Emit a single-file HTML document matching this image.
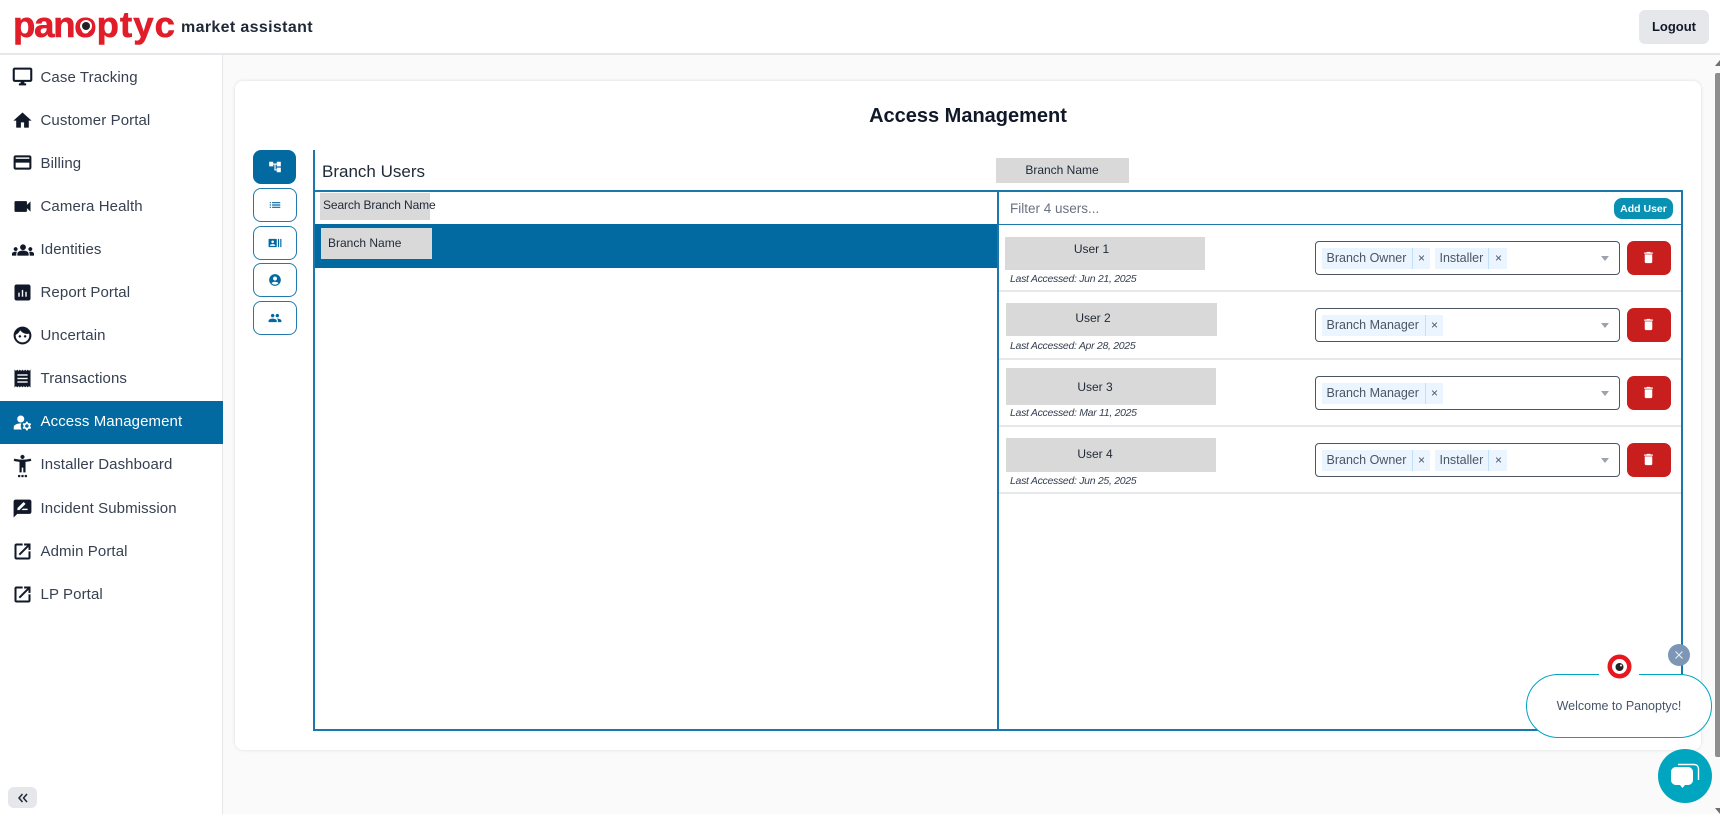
<!DOCTYPE html>
<html lang="en"><head><meta charset="utf-8"><title>Access Management</title>
<style>
*{box-sizing:border-box}
html,body{margin:0;padding:0;width:1720px;height:814px;overflow:hidden;background:#fafafa;font-family:"Liberation Sans",sans-serif}
.a{position:absolute}
.t{position:absolute;white-space:nowrap}
svg{position:absolute;display:block}
.nav{position:absolute;left:40.5px;white-space:nowrap;font-size:15px;letter-spacing:.1px;color:#374151;height:20px;line-height:20px}
.ni{fill:#111827;stroke:#111827;stroke-width:.35}
.rail{position:absolute;left:253px;width:44px;height:34px;border:1px solid #2279ad;border-radius:8px;background:#fff}
.rail svg{left:14px;top:9px;fill:#0369a1}
.g{position:absolute;background:#d9d9d9;color:#1f2937;font-size:12px;white-space:nowrap}
.sel{position:absolute;left:1315px;width:305px;height:34px;border:1px solid #4b5563;border-radius:4px;background:#fff}
.tag{position:absolute;top:6px;height:21px;background:#ebf5ff;color:#4b5563;font-size:12.5px;line-height:21px;padding-left:4.5px;white-space:nowrap}
.tag i{position:absolute;top:0;bottom:0;width:1px;background:#c2e0f8}
.tag b{position:absolute;top:0;font-weight:400;font-size:12px;color:#4b5563}
.arr{position:absolute;left:285px;top:14px;width:0;height:0;border-left:4.5px solid transparent;border-right:4.5px solid transparent;border-top:5px solid #9ca3af}
.del{position:absolute;left:1627px;width:44px;height:34px;background:#c81e1e;border-radius:7px}
.del svg{left:14px;top:9px;fill:#fff}
.ln{position:absolute;left:999px;width:682px;height:2px;background:#e5e7eb}
.la{position:absolute;left:1010px;font-size:10.5px;letter-spacing:-.3px;font-style:italic;color:#374151;white-space:nowrap;height:14px;line-height:14px}
</style></head>
<body>
<!-- header -->
<div class="a" style="left:0;top:0;width:1720px;height:55px;background:#fff;border-bottom:2px solid #e5e7eb"></div>
<div class="t" style="left:13px;top:4px;height:42px;line-height:42px;font-size:36.5px;font-weight:700;color:#e11d2a;-webkit-text-stroke:.6px #e11d2a"><span style="letter-spacing:-1.2px">pan</span><span>o</span><span style="letter-spacing:1.1px">ptyc</span></div>
<div class="a" style="left:79.5px;top:20px;width:12px;height:12px;border-radius:50%;background:#fff"></div>
<div class="a" style="left:81.5px;top:22px;width:8px;height:8px;border-radius:50%;background:#222"></div>
<div class="t" style="left:181px;top:18px;height:20px;line-height:20px;font-size:16px;font-weight:700;letter-spacing:.35px;color:#1f2937">market assistant</div>
<div class="a" style="left:1639px;top:10px;width:70px;height:34px;background:#e5e7eb;border-radius:6px;text-align:center;line-height:34px;font-size:13px;font-weight:700;color:#111827">Logout</div>

<!-- sidebar -->
<div class="a" style="left:0;top:55px;width:223px;height:759px;background:#fff;border-right:1px solid #e5e7eb"></div>
<div class="a" style="left:0;top:401px;width:223px;height:43px;background:#0369a1"></div>

<svg class="ni" style="left:12px;top:66px" width="21" height="21" viewBox="0 0 24 24"><path d="M21 2H3c-1.1 0-2 .9-2 2v12c0 1.1.9 2 2 2h7v2H8v2h8v-2h-2v-2h7c1.1 0 2-.9 2-2V4c0-1.1-.9-2-2-2zm0 14H3V4h18v12z"/></svg>
<div class="nav" style="top:68px">Case Tracking</div>
<svg class="ni" style="left:12px;top:110px" width="21" height="21" viewBox="0 0 24 24"><path d="M10 20v-6h4v6h5v-8h3L12 3 2 12h3v8z"/></svg>
<div class="nav" style="top:111px">Customer Portal</div>
<svg class="ni" style="left:12px;top:152px" width="21" height="21" viewBox="0 0 24 24"><path d="M20 4H4c-1.11 0-1.99.89-1.99 2L2 18c0 1.11.89 2 2 2h16c1.11 0 2-.89 2-2V6c0-1.11-.89-2-2-2zm0 14H4v-6h16v6zm0-10H4V6h16v2z"/></svg>
<div class="nav" style="top:154px">Billing</div>
<svg class="ni" style="left:12px;top:196px" width="21" height="21" viewBox="0 0 24 24"><path d="M17 10.5V7c0-.55-.45-1-1-1H4c-.55 0-1 .45-1 1v10c0 .55.45 1 1 1h12c.55 0 1-.45 1-1v-3.5l4 4v-11l-4 4z"/></svg>
<div class="nav" style="top:197px">Camera Health</div>
<svg class="ni" style="left:12px;top:239px" width="22" height="22" viewBox="0 0 24 24"><path d="M12 12.75c1.63 0 3.07.39 4.24.9 1.08.48 1.76 1.56 1.76 2.73V18H6v-1.61c0-1.18.68-2.26 1.76-2.73 1.17-.52 2.61-.91 4.24-.91zM4 13c1.1 0 2-.9 2-2s-.9-2-2-2-2 .9-2 2 .9 2 2 2zm1.13 1.1c-.37-.06-.74-.1-1.13-.1-.99 0-1.93.21-2.78.58C.48 14.9 0 15.62 0 16.43V18h4.5v-1.61c0-.83.23-1.61.63-2.29zM20 13c1.1 0 2-.9 2-2s-.9-2-2-2-2 .9-2 2 .9 2 2 2zm4 3.43c0-.81-.48-1.53-1.22-1.85-.85-.37-1.79-.58-2.78-.58-.39 0-.76.04-1.13.1.4.68.63 1.46.63 2.29V18H24v-1.57zM12 6c1.66 0 3 1.34 3 3s-1.34 3-3 3-3-1.34-3-3 1.34-3 3-3z"/></svg>
<div class="nav" style="top:240px">Identities</div>
<svg class="ni" style="left:12px;top:282px" width="21" height="21" viewBox="0 0 24 24"><path d="M19 3H5c-1.1 0-2 .9-2 2v14c0 1.1.9 2 2 2h14c1.1 0 2-.9 2-2V5c0-1.1-.9-2-2-2zM9 17H7v-5h2v5zm4 0h-2V9h2v8zm4 0h-2v-6h2v6z"/></svg>
<div class="nav" style="top:283px">Report Portal</div>
<svg class="ni" style="left:12px;top:325px" width="21" height="21" viewBox="0 0 24 24"><path d="M9 11.75c-.69 0-1.25.56-1.25 1.25s.56 1.25 1.25 1.25 1.25-.56 1.25-1.25-.56-1.25-1.25-1.25zm6 0c-.69 0-1.25.56-1.25 1.25s.56 1.25 1.25 1.25 1.25-.56 1.25-1.25-.56-1.25-1.25-1.25zM12 2C6.48 2 2 6.48 2 12s4.48 10 10 10 10-4.48 10-10S17.52 2 12 2zm0 18c-4.41 0-8-3.59-8-8 0-.29.02-.58.05-.86 2.36-1.05 4.23-2.98 5.21-5.37C11.07 8.33 14.05 10 17.42 10c.78 0 1.53-.09 2.25-.26.21.71.33 1.47.33 2.26 0 4.41-3.59 8-8 8z"/></svg>
<div class="nav" style="top:326px">Uncertain</div>
<svg class="ni" style="left:12px;top:368px" width="21" height="21" viewBox="0 0 24 24"><path d="M18 17H6v-2h12v2zm0-4H6v-2h12v2zm0-4H6V7h12v2zM3 22l1.5-1.5L6 22l1.5-1.5L9 22l1.5-1.5L12 22l1.5-1.5L15 22l1.5-1.5L18 22l1.5-1.5L21 22V2l-1.5 1.5L18 2l-1.5 1.5L15 2l-1.5 1.5L12 2l-1.5 1.5L9 2 7.5 3.500 6 2 4.500 3.500 3 2v20z"/></svg>
<div class="nav" style="top:369px">Transactions</div>
<svg style="left:12px;top:412px;fill:#fff" width="21" height="21" viewBox="0 0 24 24"><path d="M10 12c2.21 0 4-1.79 4-4s-1.79-4-4-4-4 1.79-4 4 1.79 4 4 4zM10.67 13.02C10.45 13.01 10.23 13 10 13c-2.42 0-4.68.67-6.61 1.82C2.51 15.34 2 16.32 2 17.35V20h9.26c-.79-1.13-1.26-2.51-1.26-4 0-1.07.25-2.07.67-2.98z"/><path d="M20.75 16c0-.22-.03-.42-.06-.63l1.14-1.01-1-1.73-1.45.49c-.32-.27-.68-.48-1.08-.63L18 11h-2l-.3 1.49c-.4.15-.76.36-1.08.63l-1.45-.49-1 1.73 1.14 1.01c-.03.21-.06.41-.06.63s.03.42.06.63l-1.14 1.01 1 1.73 1.45-.49c.32.27.68.48 1.08.63L16 21h2l.3-1.49c.4-.15.76-.36 1.08-.63l1.45.49 1-1.73-1.14-1.01c.03-.21.06-.41.06-.63zM17 18c-1.1 0-2-.9-2-2s.9-2 2-2 2 .9 2 2-.9 2-2 2z"/></svg>
<div class="nav" style="top:412px;color:#fff">Access Management</div>
<svg class="ni" style="left:11px;top:453px" width="23" height="26" viewBox="0 0 24 27"><path d="M20.5 6c-2.61.7-5.67 1-8.5 1s-5.89-.3-8.5-1L3 8c1.86.5 4 .83 6 1v11h2v-5h2v5h2V9c2-.17 4.14-.5 6-1l-.5-2zM12 6c1.1 0 2-.9 2-2s-.9-2-2-2-2 .9-2 2 .9 2 2 2z"/><path d="M7.500 23h2v2h-2zM11 23h2v2h-2zM14.500 23h2v2h-2z"/></svg>
<div class="nav" style="top:455px">Installer Dashboard</div>
<svg class="ni" style="left:12px;top:498px" width="21" height="21" viewBox="0 0 24 24"><path d="M20 2H4c-1.1 0-2 .9-2 2v18l4-4h14c1.1 0 2-.9 2-2V4c0-1.100-.9-2-2-2zM6 14v-2.470l6.880-6.880c.2-.2.51-.2.71 0l1.770 1.770c.2.2.2.51 0 .71L8.470 14H6zm12 0h-7.500l2-2H18v2z"/></svg>
<div class="nav" style="top:499px">Incident Submission</div>
<svg class="ni" style="left:12px;top:541px" width="21" height="21" viewBox="0 0 24 24"><path d="M19 19H5V5h7V3H5c-1.110 0-2 .9-2 2v14c0 1.100.89 2 2 2h14c1.100 0 2-.9 2-2v-7h-2v7zM14 3v2h3.590l-9.830 9.830 1.410 1.410L19 6.410V10h2V3h-7z"/></svg>
<div class="nav" style="top:542px">Admin Portal</div>
<svg class="ni" style="left:12px;top:584px" width="21" height="21" viewBox="0 0 24 24"><path d="M19 19H5V5h7V3H5c-1.110 0-2 .9-2 2v14c0 1.100.89 2 2 2h14c1.100 0 2-.9 2-2v-7h-2v7zM14 3v2h3.590l-9.830 9.830 1.410 1.410L19 6.410V10h2V3h-7z"/></svg>
<div class="nav" style="top:585px">LP Portal</div>

<div class="a" style="left:8px;top:787px;width:29px;height:21px;background:#e5e7eb;border-radius:6px"></div>
<svg style="left:18px;top:793px;fill:none;stroke:#1f2937;stroke-width:1.500" width="10" height="10" viewBox="0 0 10 10"><path d="M4.500 1 1 5l3.500 4M9 1 5.500 5 9 9"/></svg>

<!-- card -->
<div class="a" style="left:235px;top:81px;width:1466px;height:669px;background:#fff;border-radius:8px;box-shadow:0 0 3px rgba(0,0,0,.12)"></div>
<div class="t" style="left:235px;width:1466px;top:103px;height:26px;line-height:26px;text-align:center;font-size:20px;font-weight:700;color:#111827">Access Management</div>

<!-- rail -->
<div class="rail" style="top:150px;width:43px;background:#0369a1;border-color:#0369a1"><svg style="left:14px;top:9px;fill:#fff" width="14" height="14" viewBox="0 0 24 24"><path d="M22 11V3h-7v3H9V3H2v8h7V8h2v10h4v3h7v-8h-7v3h-2V8h2v3z"/></svg></div>
<div class="rail" style="top:188px"><svg width="14" height="14" viewBox="0 0 24 24"><path d="M3 13h2v-2H3v2zm0 4h2v-2H3v2zm0-8h2V7H3v2zm4 4h14v-2H7v2zm0 4h14v-2H7v2zM7 7v2h14V7H7z"/></svg></div>
<div class="rail" style="top:226px"><svg width="14" height="14" viewBox="0 0 24 24"><path d="M21 5v14h2V5h-2zm-4 14h2V5h-2v14zM14 5H2c-.55 0-1 .45-1 1v12c0 .55.45 1 1 1h12c.55 0 1-.45 1-1V6c0-.55-.45-1-1-1zM8 7.750c1.240 0 2.250 1.010 2.250 2.250S9.240 12.250 8 12.250 5.750 11.240 5.750 10 6.760 7.750 8 7.750zM12.500 17h-9v-.75c0-1.500 3-2.250 4.500-2.250s4.500.75 4.500 2.250V17z"/></svg></div>
<div class="rail" style="top:263px"><svg width="14" height="14" viewBox="0 0 24 24"><path d="M12 2C6.480 2 2 6.480 2 12s4.480 10 10 10 10-4.480 10-10S17.520 2 12 2zm0 4c1.930 0 3.500 1.570 3.500 3.500S13.930 13 12 13s-3.500-1.570-3.500-3.500S10.070 6 12 6zm0 14c-2.030 0-4.430-.82-6.140-2.880C7.550 15.800 9.680 15 12 15s4.450.8 6.140 2.120C16.430 19.180 14.030 20 12 20z"/></svg></div>
<div class="rail" style="top:301px"><svg width="14" height="14" viewBox="0 0 24 24"><path d="M16 11c1.660 0 2.990-1.340 2.990-3S17.660 5 16 5c-1.660 0-3 1.340-3 3s1.340 3 3 3zm-8 0c1.660 0 2.990-1.340 2.990-3S9.660 5 8 5C6.340 5 5 6.340 5 8s1.340 3 3 3zm0 2c-2.330 0-7 1.170-7 3.500V19h14v-2.500c0-2.330-4.670-3.500-7-3.500zm8 0c-.29 0-.62.02-.97.05 1.160.84 1.970 1.970 1.970 3.450V19h6v-2.500c0-2.330-4.670-3.500-7-3.500z"/></svg></div>

<!-- panel frame -->
<div class="a" style="left:313px;top:150px;width:2px;height:581px;background:#1a78ad"></div>
<div class="a" style="left:313px;top:190px;width:1370px;height:2px;background:#1a78ad"></div>
<div class="a" style="left:1681px;top:190px;width:2px;height:541px;background:#1a78ad"></div>
<div class="a" style="left:313px;top:729px;width:1370px;height:2px;background:#1a78ad"></div>
<div class="a" style="left:997px;top:190px;width:2px;height:541px;background:#1a78ad"></div>
<div class="a" style="left:999px;top:224px;width:682px;height:1px;background:#1a78ad"></div>

<div class="t" style="left:322px;top:161px;height:22px;line-height:22px;font-size:17px;color:#1f2937">Branch Users</div>
<div class="g" style="left:996px;top:158px;width:133px;height:25px;line-height:24px;text-align:center;padding-right:1px">Branch Name</div>

<div class="g" style="left:320px;top:193px;width:110px;height:27px;line-height:25px;padding-left:3px;letter-spacing:-.12px">Search Branch Name</div>
<div class="a" style="left:315px;top:224px;width:682px;height:44px;background:#0369a1"></div>
<div class="g" style="left:321px;top:228px;width:111px;height:31px;line-height:31px;padding-left:7px">Branch Name</div>

<div class="t" style="left:1010px;top:199px;height:20px;line-height:20px;font-size:13.500px;color:#6b7280">Filter 4 users...</div>
<div class="a" style="left:1614px;top:198px;width:59px;height:21px;background:#0891b2;border-radius:8px;color:#fff;font-size:10.500px;font-weight:700;line-height:23px;text-align:center">Add User</div>

<!-- row 1 -->
<div class="g" style="left:1005px;top:237px;width:200px;height:33px;line-height:24px;text-align:center;padding-right:27px">User 1</div>
<div class="la" style="top:272px">Last Accessed: Jun 21, 2025</div>
<div class="sel" style="top:241px"><div class="tag" style="left:6px;width:108px">Branch Owner<i style="left:90px"></i><b style="left:96px">×</b></div><div class="tag" style="left:119px;width:72px">Installer<i style="left:53px"></i><b style="left:60px">×</b></div><div class="arr"></div></div>
<div class="del" style="top:241px"><svg width="15" height="15" viewBox="0 0 24 24"><path d="M6 19c0 1.100.9 2 2 2h8c1.100 0 2-.9 2-2V7H6v12zM19 4h-3.500l-1-1h-5l-1 1H5v2h14V4z"/></svg></div>
<div class="ln" style="top:290px"></div>

<!-- row 2 -->
<div class="g" style="left:1006px;top:303px;width:211px;height:33px;line-height:30px;text-align:center;padding-right:37px">User 2</div>
<div class="la" style="top:339px">Last Accessed: Apr 28, 2025</div>
<div class="sel" style="top:308px"><div class="tag" style="left:6px;width:121px">Branch Manager<i style="left:103px"></i><b style="left:109px">×</b></div><div class="arr"></div></div>
<div class="del" style="top:308px"><svg width="15" height="15" viewBox="0 0 24 24"><path d="M6 19c0 1.100.9 2 2 2h8c1.100 0 2-.9 2-2V7H6v12zM19 4h-3.500l-1-1h-5l-1 1H5v2h14V4z"/></svg></div>
<div class="ln" style="top:358px"></div>

<!-- row 3 -->
<div class="g" style="left:1006px;top:368px;width:210px;height:37px;line-height:39px;text-align:center;padding-right:32px">User 3</div>
<div class="la" style="top:406px">Last Accessed: Mar 11, 2025</div>
<div class="sel" style="top:376px"><div class="tag" style="left:6px;width:121px">Branch Manager<i style="left:103px"></i><b style="left:109px">×</b></div><div class="arr"></div></div>
<div class="del" style="top:376px"><svg width="15" height="15" viewBox="0 0 24 24"><path d="M6 19c0 1.100.9 2 2 2h8c1.100 0 2-.9 2-2V7H6v12zM19 4h-3.500l-1-1h-5l-1 1H5v2h14V4z"/></svg></div>
<div class="ln" style="top:425px"></div>

<!-- row 4 -->
<div class="g" style="left:1006px;top:438px;width:210px;height:34px;line-height:33px;text-align:center;padding-right:32px">User 4</div>
<div class="la" style="top:474px">Last Accessed: Jun 25, 2025</div>
<div class="sel" style="top:443px"><div class="tag" style="left:6px;width:108px">Branch Owner<i style="left:90px"></i><b style="left:96px">×</b></div><div class="tag" style="left:119px;width:72px">Installer<i style="left:53px"></i><b style="left:60px">×</b></div><div class="arr"></div></div>
<div class="del" style="top:443px"><svg width="15" height="15" viewBox="0 0 24 24"><path d="M6 19c0 1.100.9 2 2 2h8c1.100 0 2-.9 2-2V7H6v12zM19 4h-3.500l-1-1h-5l-1 1H5v2h14V4z"/></svg></div>
<div class="ln" style="top:492px"></div>

<!-- chat widget -->
<div class="a" style="left:1526px;top:674px;width:186px;height:64px;border:1.500px solid #00a5c0;border-radius:32px;background:#fff"></div>
<div class="a" style="left:1599px;top:672px;width:40px;height:5px;background:#fff"></div>
<div class="t" style="left:1526px;width:186px;top:697px;height:18px;line-height:18px;text-align:center;font-size:12.500px;color:#475569">Welcome to Panoptyc!</div>
<svg style="left:1607px;top:654px" width="25" height="25" viewBox="0 0 25 25"><circle cx="12.500" cy="12.500" r="12" fill="#e8161f"/><circle cx="12.500" cy="12.500" r="7.500" fill="#fff"/><circle cx="12.500" cy="13" r="4" fill="#222"/><circle cx="14" cy="11.500" r="1" fill="#fff"/></svg>
<svg style="left:1668px;top:644px" width="22" height="22" viewBox="0 0 22 22"><circle cx="11" cy="11" r="11" fill="#7d96b5"/><path d="M7.500 7.500l7 7m0-7l-7 7" stroke="#e8eef5" stroke-width="1.100"/></svg>
<svg style="left:1658px;top:749px;z-index:2" width="54" height="54" viewBox="0 0 54 54"><circle cx="27" cy="27" r="27" fill="#00a6bf"/><path d="M20 15.500h16c2.800 0 4.500 1.800 4.500 4.500v11" fill="none" stroke="#fff" stroke-width="1.400"/><path d="M18 18h12c2.800 0 5 2.200 5 5v8c0 2.800-2.200 5-5 5h-3l-2.500 3-2.500-3h-4c-2.800 0-5-2.200-5-5v-8c0-2.800 2.200-5 5-5z" fill="#fff"/></svg>

<!-- scrollbar -->
<div class="a" style="left:1715px;top:73px;width:5px;height:684px;background:#8e8e8e;border-radius:2px 0 0 2px"></div>
<div class="a" style="left:1715px;top:60px;width:0;height:0;border-left:5px solid transparent;border-right:5px solid transparent;border-bottom:6px solid #6f6f6f"></div>
<div class="a" style="left:1715px;top:808px;width:0;height:0;border-left:5px solid transparent;border-right:5px solid transparent;border-top:6px solid #6f6f6f"></div>
</body></html>
